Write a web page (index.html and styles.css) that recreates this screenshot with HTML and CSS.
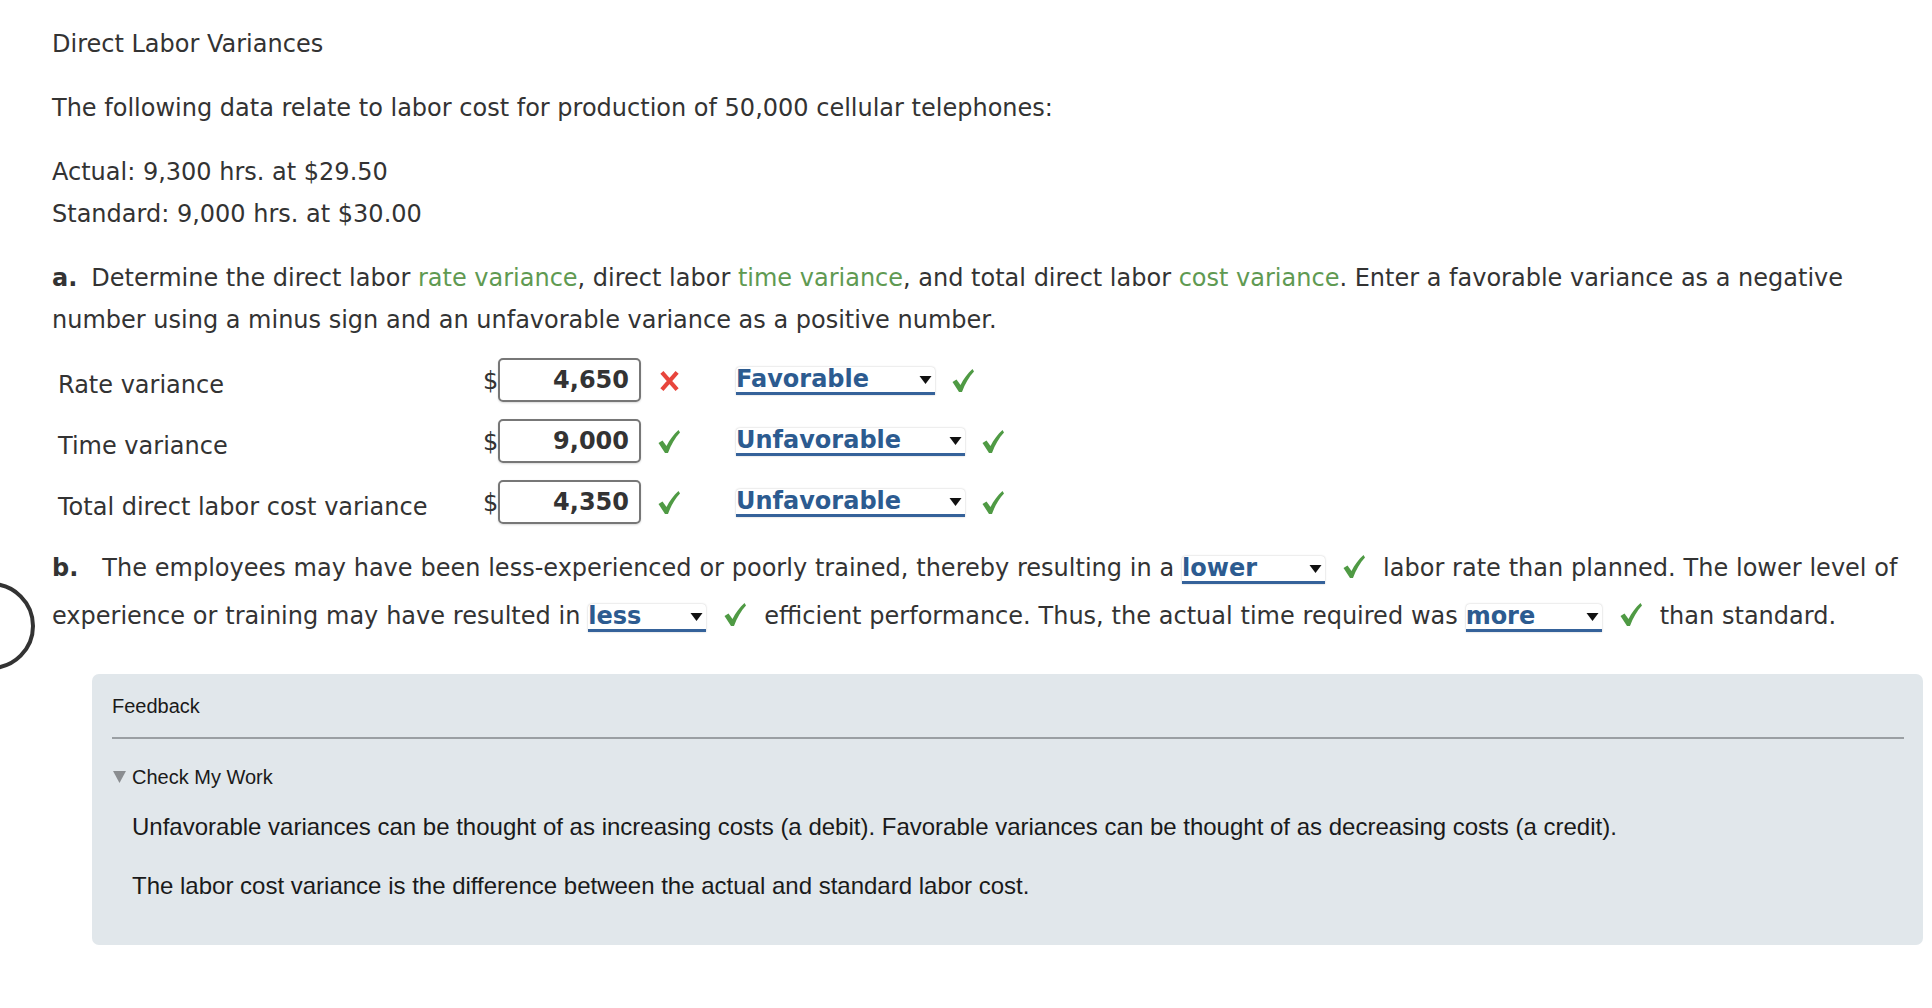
FILE: index.html
```html
<!DOCTYPE html>
<html>
<head>
<meta charset="utf-8">
<title>Direct Labor Variances</title>
<link rel="stylesheet" href="styles.css">
</head>
<body>
<div class="page">
  <div class="ring"><span class="ring-mark"></span></div>
  <p class="title">Direct Labor Variances</p>
  <p>The following data relate to labor cost for production of 50,000 cellular telephones:</p>
  <p>Actual: 9,300 hrs. at $29.50<br>Standard: 9,000 hrs. at $30.00</p>
  <p class="qa"><b class="qlabel">a.</b>Determine the direct labor <span class="term">rate variance</span>, direct labor <span class="term">time variance</span>, and total direct labor <span class="term">cost variance</span>. Enter a favorable variance as a negative<br>number using a minus sign and an unfavorable variance as a positive number.</p>

  <div class="rows">
    <div class="row">
      <span class="label">Rate variance</span>
      <span class="dollar">$</span>
      <span class="amount">4,650</span>
      <svg class="mark xmark" viewBox="0 0 20 20"><path d="M2 1 L18 19 M18 1 L2 19" /></svg>
      <span class="dd dd-fav"><span>Favorable</span><svg class="tri" viewBox="0 0 12 8"><path d="M0 0 H12 L6 8 Z"/></svg></span>
      <svg class="mark check" viewBox="0 0 22 24"><path d="M0.5 13 L4.5 10.5 L8.5 16 C11.5 10 15.5 4.5 20.5 0 L22 2.5 C17 8 13 14.5 10 23 L7 23 Z"/></svg>
    </div>
    <div class="row">
      <span class="label">Time variance</span>
      <span class="dollar">$</span>
      <span class="amount">9,000</span>
      <svg class="mark check" viewBox="0 0 22 24"><path d="M0.5 13 L4.5 10.5 L8.5 16 C11.5 10 15.5 4.5 20.5 0 L22 2.5 C17 8 13 14.5 10 23 L7 23 Z"/></svg>
      <span class="dd dd-unfav"><span>Unfavorable</span><svg class="tri" viewBox="0 0 12 8"><path d="M0 0 H12 L6 8 Z"/></svg></span>
      <svg class="mark check" viewBox="0 0 22 24"><path d="M0.5 13 L4.5 10.5 L8.5 16 C11.5 10 15.5 4.5 20.5 0 L22 2.5 C17 8 13 14.5 10 23 L7 23 Z"/></svg>
    </div>
    <div class="row">
      <span class="label">Total direct labor cost variance</span>
      <span class="dollar">$</span>
      <span class="amount">4,350</span>
      <svg class="mark check" viewBox="0 0 22 24"><path d="M0.5 13 L4.5 10.5 L8.5 16 C11.5 10 15.5 4.5 20.5 0 L22 2.5 C17 8 13 14.5 10 23 L7 23 Z"/></svg>
      <span class="dd dd-unfav"><span>Unfavorable</span><svg class="tri" viewBox="0 0 12 8"><path d="M0 0 H12 L6 8 Z"/></svg></span>
      <svg class="mark check" viewBox="0 0 22 24"><path d="M0.5 13 L4.5 10.5 L8.5 16 C11.5 10 15.5 4.5 20.5 0 L22 2.5 C17 8 13 14.5 10 23 L7 23 Z"/></svg>
    </div>
  </div>

  <p class="qb"><b class="qlabel qlabel-b">b.</b>The employees may have been less-experienced or poorly trained, thereby resulting in a <span class="dd dd-lower"><span>lower</span><svg class="tri" viewBox="0 0 12 8"><path d="M0 0 H12 L6 8 Z"/></svg></span><svg class="mark check inline-check" viewBox="0 0 22 24"><path d="M0.5 13 L4.5 10.5 L8.5 16 C11.5 10 15.5 4.5 20.5 0 L22 2.5 C17 8 13 14.5 10 23 L7 23 Z"/></svg>labor rate than planned. The lower level of<br>experience or training may have resulted in <span class="dd dd-less"><span>less</span><svg class="tri" viewBox="0 0 12 8"><path d="M0 0 H12 L6 8 Z"/></svg></span><svg class="mark check inline-check" viewBox="0 0 22 24"><path d="M0.5 13 L4.5 10.5 L8.5 16 C11.5 10 15.5 4.5 20.5 0 L22 2.5 C17 8 13 14.5 10 23 L7 23 Z"/></svg>efficient performance. Thus, the actual time required was <span class="dd dd-more"><span>more</span><svg class="tri" viewBox="0 0 12 8"><path d="M0 0 H12 L6 8 Z"/></svg></span><svg class="mark check inline-check" viewBox="0 0 22 24"><path d="M0.5 13 L4.5 10.5 L8.5 16 C11.5 10 15.5 4.5 20.5 0 L22 2.5 C17 8 13 14.5 10 23 L7 23 Z"/></svg>than standard.</p>

  <div class="feedback">
    <div class="fb-title">Feedback</div>
    <div class="fb-rule"></div>
    <div class="fb-toggle"><svg class="fb-tri" viewBox="0 0 14 13"><path d="M0 0 H14 L7 13 Z"/></svg>Check My Work</div>
    <p class="fb-text fb-first">Unfavorable variances can be thought of as increasing costs (a debit). Favorable variances can be thought of as decreasing costs (a credit).</p>
    <p class="fb-text fb-second">The labor cost variance is the difference between the actual and standard labor cost.</p>
  </div>
</div>
</body>
</html>
```

FILE: styles.css
```css
html, body {
  margin: 0;
  padding: 0;
  background: #ffffff;
}

body {
  font-family: "DejaVu Sans", Verdana, sans-serif;
  font-size: 24px;
  color: #333333;
  overflow: hidden;
}

.page {
  position: relative;
  padding: 23px 0 0 52px;
  min-height: 985px;
}

.page > p {
  margin: 0 0 22px 0;
  line-height: 42px;
}

.ring {
  position: absolute;
  left: -53px;
  top: 582px;
  width: 88px;
  height: 88px;
  box-sizing: border-box;
  border: 4px solid #333333;
  border-radius: 50%;
}

.ring-mark {
  position: absolute;
  left: 42px;
  top: 30px;
  width: 6px;
  height: 22px;
  background: #d8d8d8;
}

.qlabel {
  font-weight: bold;
  margin-right: 14px;
}

.qlabel-b {
  margin-right: 24px;
}

.term {
  color: #5f9a52;
}

.page > p.qa {
  margin-bottom: 9px;
}

.rows {
  display: flex;
  flex-direction: column;
}

.row {
  height: 61px;
  display: flex;
  align-items: center;
}

.label {
  width: 425px;
  padding: 8px 0 0 6px;
  box-sizing: content-box;
}

.dollar {
  width: 15px;
}

.amount {
  box-sizing: border-box;
  width: 143px;
  height: 44px;
  border: 2px solid #777777;
  border-radius: 5px;
  padding-right: 10px;
  text-align: right;
  font-weight: bold;
  line-height: 40px;
  box-shadow: 0 1px 2px rgba(0, 0, 0, 0.15);
  margin-top: -2px;
}

.mark {
  flex: none;
}

.xmark {
  width: 19px;
  height: 20px;
  margin: 0 57px 0 19px;
}

.xmark path {
  stroke: #e8453c;
  stroke-width: 4.4;
  fill: none;
}

.check {
  width: 22px;
  height: 24px;
}

.check path {
  fill: #4f9a44;
}

.row .amount + .check {
  margin: 0 56px 0 17px;
}

.row .dd + .check {
  margin-left: 17px;
}

.dd {
  display: inline-flex;
  justify-content: space-between;
  align-items: flex-start;
  box-sizing: border-box;
  height: 28px;
  background: #ffffff;
  border-radius: 4px 4px 0 0;
  border-bottom: 3px solid #35629a;
  box-shadow: 0 0 2px rgba(0, 0, 0, 0.25);
  color: #2c5b90;
  font-weight: bold;
  line-height: 25px;
  padding-right: 3px;
}

.tri {
  width: 13px;
  height: 8px;
  margin-top: 9px;
}

.tri path {
  fill: #111111;
}

.dd-fav { width: 199px; }
.dd-unfav { width: 229px; }
.dd-lower { width: 143px; }
.dd-less { width: 118px; }
.dd-more { width: 136px; }

.page > p.qb {
  margin-top: 11px;
  line-height: 48px;
  margin-bottom: 0;
  word-spacing: 0.2px;
}

.inline-check {
  margin: 0 18px;
  vertical-align: -3px;
}

.feedback {
  margin: 34px 9px 0 40px;
  height: 271px;
  box-sizing: border-box;
  background: #e1e7eb;
  border-radius: 7px;
  padding: 20px 19px 0 20px;
  font-family: "Liberation Sans", Arial, sans-serif;
  font-size: 20px;
  color: #1a1a1a;
}

.fb-title {
  line-height: 24px;
}

.fb-rule {
  height: 2px;
  background: #9a9fa3;
  margin-top: 19px;
}

.fb-toggle {
  margin-top: 26px;
  line-height: 24px;
  display: flex;
  align-items: center;
}

.fb-tri {
  width: 13px;
  height: 12px;
  margin: 0 6px 0 1px;
}

.fb-tri path {
  fill: #8a8d90;
}

.fb-text {
  margin: 0;
  padding-left: 20px;
  line-height: 28px;
  font-size: 24px;
}

.fb-first {
  margin-top: 24px;
}

.fb-second {
  margin-top: 31px;
}
```
